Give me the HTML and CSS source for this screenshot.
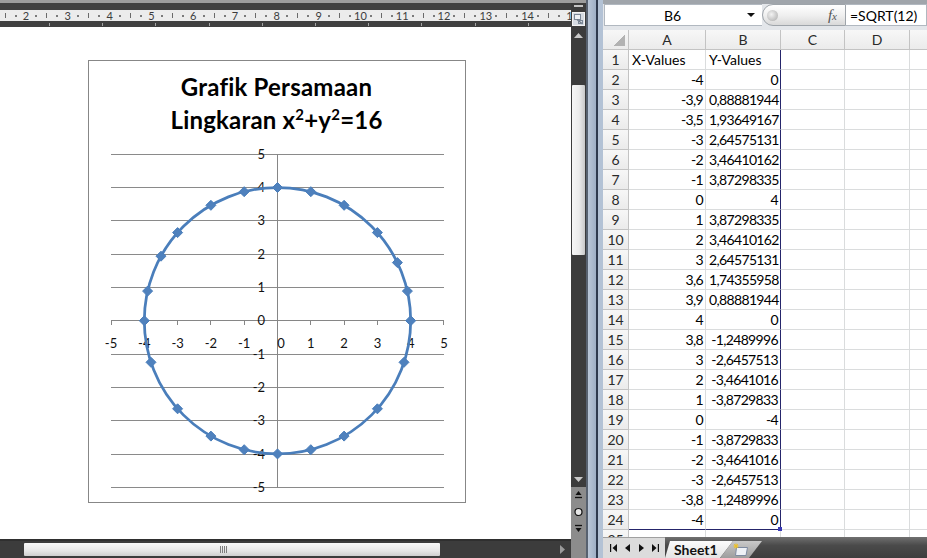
FILE: index.html
```html
<!DOCTYPE html>
<html>
<head>
<meta charset="utf-8">
<title>Grafik Persamaan Lingkaran</title>
<link rel="stylesheet" href="styles.css">
</head>
<body>
<div class="app">
  <div class="word">
    <div class="ruler-wrap">
      <div class="ruler-top"></div>
      <div class="ruler-gap"></div>
      <div class="ruler">
        <div class="ruler-marks">
          <div class="seg"><span class="num"></span><span class="dot"></span><span class="bar"></span><span class="dot"></span></div>
          <div class="seg"><span class="num">2</span><span class="dot"></span><span class="bar"></span><span class="dot"></span></div>
          <div class="seg"><span class="num">3</span><span class="dot"></span><span class="bar"></span><span class="dot"></span></div>
          <div class="seg"><span class="num">4</span><span class="dot"></span><span class="bar"></span><span class="dot"></span></div>
          <div class="seg"><span class="num">5</span><span class="dot"></span><span class="bar"></span><span class="dot"></span></div>
          <div class="seg"><span class="num">6</span><span class="dot"></span><span class="bar"></span><span class="dot"></span></div>
          <div class="seg"><span class="num">7</span><span class="dot"></span><span class="bar"></span><span class="dot"></span></div>
          <div class="seg"><span class="num">8</span><span class="dot"></span><span class="bar"></span><span class="dot"></span></div>
          <div class="seg"><span class="num">9</span><span class="dot"></span><span class="bar"></span><span class="dot"></span></div>
          <div class="seg"><span class="num">10</span><span class="dot"></span><span class="bar"></span><span class="dot"></span></div>
          <div class="seg"><span class="num">11</span><span class="dot"></span><span class="bar"></span><span class="dot"></span></div>
          <div class="seg"><span class="num">12</span><span class="dot"></span><span class="bar"></span><span class="dot"></span></div>
          <div class="seg"><span class="num">13</span><span class="dot"></span><span class="bar"></span><span class="dot"></span></div>
          <div class="seg"><span class="num">14</span><span class="dot"></span><span class="bar"></span><span class="dot"></span></div>
          <div class="seg"><span class="num">1</span></div>
        </div>
      </div>
      <div class="ruler-tabs">
        <i></i><i></i><i></i><i></i><i></i><i></i><i></i><i></i><i></i><i></i>
      </div>
    </div>

    <div class="vscroll">
      <div class="vs-top"></div>
      <div class="vs-split"><i></i></div>
      <div class="vs-icon">
        <svg width="13" height="14" viewBox="0 0 13 14">
          <rect x="0.5" y="0.5" width="12" height="13" fill="#d6dbe2" stroke="#f2f2f2"/>
          <rect x="2.5" y="2.5" width="6" height="5" fill="#eef1f5" stroke="#7b8796"/>
          <path d="M5 7.5 L10.5 12" stroke="#6c7785" stroke-width="1.2"/>
          <rect x="6.5" y="8.5" width="4" height="3" fill="none" stroke="#7b8796"/>
        </svg>
      </div>
      <div class="vs-btn"><svg width="9" height="5" viewBox="0 0 9 5"><path d="M0 5 L4.5 0 L9 5Z" fill="#c9c9c9"/></svg></div>
      <div class="vs-track"><div class="vs-thumb"></div></div>
      <div class="vs-btn"><svg width="9" height="5" viewBox="0 0 9 5"><path d="M0 0 L4.5 5 L9 0Z" fill="#c9c9c9"/></svg></div>
      <div class="vs-browse">
        <svg width="15" height="71" viewBox="0 0 15 71">
          <path d="M4.5 8 L7.5 4 L10.5 8Z" fill="#111"/>
          <path d="M4 10.5 H11" stroke="#111" stroke-width="1.3"/>
          <circle cx="7.5" cy="25" r="3.5" fill="#e6e6e6" stroke="#111" stroke-width="1.2"/>
          <path d="M4 38.5 H11" stroke="#111" stroke-width="1.3"/>
          <path d="M4.5 41 L7.5 45 L10.5 41Z" fill="#111"/>
        </svg>
      </div>
    </div>

    <div class="doc">
      <div class="chart">
        <svg width="376" height="441" viewBox="1 1 376 441" class="chart-svg">
          <text x="188.5" y="36" class="title">Grafik Persamaan</text>
          <text x="188.5" y="69" class="title">Lingkaran x<tspan class="sup" dy="-9">2</tspan><tspan dy="9">+y</tspan><tspan class="sup" dy="-9">2</tspan><tspan dy="9">=16</tspan></text>

          <g class="grid">
            <path d="M23 94.5 H356 M23 127.5 H356 M23 160.5 H356 M23 194.5 H356 M23 227.5 H356 M23 294.5 H356 M23 327.5 H356 M23 360.5 H356 M23 394.5 H356 M23 427.5 H356"/>
          </g>
          <g class="axis">
            <path d="M23 260.5 H356 M189.5 94 V428"/>
            <path d="M23.5 260.5 V265 M56.5 260.5 V265 M89.5 260.5 V265 M122.5 260.5 V265 M156.5 260.5 V265 M222.5 260.5 V265 M256.5 260.5 V265 M289.5 260.5 V265 M322.5 260.5 V265 M355.5 260.5 V265"/>
          </g>

          <g class="xl">
            <text x="23" y="288">-5</text>
            <text x="56.3" y="288">-4</text>
            <text x="89.6" y="288">-3</text>
            <text x="122.9" y="288">-2</text>
            <text x="156.2" y="288">-1</text>
            <text x="193" y="288">0</text>
            <text x="222.8" y="288">1</text>
            <text x="256.1" y="288">2</text>
            <text x="289.4" y="288">3</text>
            <text x="322.7" y="288">4</text>
            <text x="356" y="288">5</text>
          </g>
          <g class="yl">
            <text x="177" y="99">5</text>
            <text x="177" y="132">4</text>
            <text x="177" y="165">3</text>
            <text x="177" y="199">2</text>
            <text x="177" y="232">1</text>
            <text x="177" y="265">0</text>
            <text x="177" y="299">-1</text>
            <text x="177" y="332">-2</text>
            <text x="177" y="365">-3</text>
            <text x="177" y="399">-4</text>
            <text x="177" y="432">-5</text>
          </g>

          <circle cx="189.5" cy="260.7" r="133.2" class="series"/>

          <defs>
            <path id="dm" d="M0 -5 L5 0 L0 5 L-5 0Z"/>
          </defs>
          <g class="markers">
            <use href="#dm" x="56.3" y="260.7"/>
            <use href="#dm" x="59.6" y="231.1"/>
            <use href="#dm" x="73.0" y="196.2"/>
            <use href="#dm" x="89.6" y="172.6"/>
            <use href="#dm" x="122.9" y="145.3"/>
            <use href="#dm" x="156.2" y="131.7"/>
            <use href="#dm" x="189.5" y="127.5"/>
            <use href="#dm" x="222.8" y="131.7"/>
            <use href="#dm" x="256.1" y="145.3"/>
            <use href="#dm" x="289.4" y="172.6"/>
            <use href="#dm" x="309.4" y="202.6"/>
            <use href="#dm" x="319.4" y="231.1"/>
            <use href="#dm" x="322.7" y="260.7"/>
            <use href="#dm" x="316.0" y="302.3"/>
            <use href="#dm" x="289.4" y="348.8"/>
            <use href="#dm" x="256.1" y="376.1"/>
            <use href="#dm" x="222.8" y="389.7"/>
            <use href="#dm" x="189.5" y="393.9"/>
            <use href="#dm" x="156.2" y="389.7"/>
            <use href="#dm" x="122.9" y="376.1"/>
            <use href="#dm" x="89.6" y="348.8"/>
            <use href="#dm" x="63.0" y="302.3"/>
          </g>
        </svg>
      </div>
    </div>

    <div class="hscroll">
      <div class="hs-thumb"><span class="grip"><i></i><i></i><i></i><i></i></span></div>
      <div class="hs-arrow"><svg width="5" height="9" viewBox="0 0 5 9"><path d="M0 0 L5 4.5 L0 9Z" fill="#9a9a9a"/></svg></div>
    </div>
  </div>

  <div class="divider"></div>

  <div class="excel">
    <div class="fbar">
      <div class="namebox">
        <span class="nb-text">B6</span>
        <span class="nb-arrow"><svg width="8" height="4" viewBox="0 0 8 4"><path d="M0 0 L8 0 L4 4Z" fill="#111"/></svg></span>
      </div>
      <div class="fx-btn">
        <span class="knob"></span>
        <span class="fx">f<span class="fx-x">x</span></span>
      </div>
      <div class="formula">=SQRT(12)</div>
    </div>

    <div class="sheet">
      <div class="corner"><i></i></div><div class="ch">A</div><div class="ch">B</div><div class="ch">C</div><div class="ch">D</div><div class="ch last"></div>

      <div class="rh">1</div><div class="c">X-Values</div><div class="c selr">Y-Values</div><div class="c"></div><div class="c"></div><div class="c last"></div>
      <div class="rh">2</div><div class="c n">-4</div><div class="c n selr">0</div><div class="c"></div><div class="c"></div><div class="c last"></div>
      <div class="rh">3</div><div class="c n">-3,9</div><div class="c n selr">0,88881944</div><div class="c"></div><div class="c"></div><div class="c last"></div>
      <div class="rh">4</div><div class="c n">-3,5</div><div class="c n selr">1,93649167</div><div class="c"></div><div class="c"></div><div class="c last"></div>
      <div class="rh">5</div><div class="c n">-3</div><div class="c n selr">2,64575131</div><div class="c"></div><div class="c"></div><div class="c last"></div>
      <div class="rh">6</div><div class="c n">-2</div><div class="c n selr">3,46410162</div><div class="c"></div><div class="c"></div><div class="c last"></div>
      <div class="rh">7</div><div class="c n">-1</div><div class="c n selr">3,87298335</div><div class="c"></div><div class="c"></div><div class="c last"></div>
      <div class="rh">8</div><div class="c n">0</div><div class="c n selr">4</div><div class="c"></div><div class="c"></div><div class="c last"></div>
      <div class="rh">9</div><div class="c n">1</div><div class="c n selr">3,87298335</div><div class="c"></div><div class="c"></div><div class="c last"></div>
      <div class="rh">10</div><div class="c n">2</div><div class="c n selr">3,46410162</div><div class="c"></div><div class="c"></div><div class="c last"></div>
      <div class="rh">11</div><div class="c n">3</div><div class="c n selr">2,64575131</div><div class="c"></div><div class="c"></div><div class="c last"></div>
      <div class="rh">12</div><div class="c n">3,6</div><div class="c n selr">1,74355958</div><div class="c"></div><div class="c"></div><div class="c last"></div>
      <div class="rh">13</div><div class="c n">3,9</div><div class="c n selr">0,88881944</div><div class="c"></div><div class="c"></div><div class="c last"></div>
      <div class="rh">14</div><div class="c n">4</div><div class="c n selr">0</div><div class="c"></div><div class="c"></div><div class="c last"></div>
      <div class="rh">15</div><div class="c n">3,8</div><div class="c n selr">-1,2489996</div><div class="c"></div><div class="c"></div><div class="c last"></div>
      <div class="rh">16</div><div class="c n">3</div><div class="c n selr">-2,6457513</div><div class="c"></div><div class="c"></div><div class="c last"></div>
      <div class="rh">17</div><div class="c n">2</div><div class="c n selr">-3,4641016</div><div class="c"></div><div class="c"></div><div class="c last"></div>
      <div class="rh">18</div><div class="c n">1</div><div class="c n selr">-3,8729833</div><div class="c"></div><div class="c"></div><div class="c last"></div>
      <div class="rh">19</div><div class="c n">0</div><div class="c n selr">-4</div><div class="c"></div><div class="c"></div><div class="c last"></div>
      <div class="rh">20</div><div class="c n">-1</div><div class="c n selr">-3,8729833</div><div class="c"></div><div class="c"></div><div class="c last"></div>
      <div class="rh">21</div><div class="c n">-2</div><div class="c n selr">-3,4641016</div><div class="c"></div><div class="c"></div><div class="c last"></div>
      <div class="rh">22</div><div class="c n">-3</div><div class="c n selr">-2,6457513</div><div class="c"></div><div class="c"></div><div class="c last"></div>
      <div class="rh">23</div><div class="c n">-3,8</div><div class="c n selr">-1,2489996</div><div class="c"></div><div class="c"></div><div class="c last"></div>
      <div class="rh">24</div><div class="c n selb">-4</div><div class="c n selr selb handle">0</div><div class="c"></div><div class="c"></div><div class="c last"></div>
      <div class="rh r25"></div><div class="c"></div><div class="c"></div><div class="c"></div><div class="c"></div><div class="c last"></div>
    </div>

    <div class="tabs">
      <div class="tab-nav">
        <svg width="7" height="8" viewBox="0 0 7 8"><path d="M0.5 0 V8" stroke="#111" stroke-width="1.4"/><path d="M7 0 L2.5 4 L7 8Z" fill="#111"/></svg>
        <svg width="5" height="8" viewBox="0 0 5 8"><path d="M5 0 L0 4 L5 8Z" fill="#111"/></svg>
        <svg width="5" height="8" viewBox="0 0 5 8"><path d="M0 0 L5 4 L0 8Z" fill="#111"/></svg>
        <svg width="7" height="8" viewBox="0 0 7 8"><path d="M0 0 L4.5 4 L0 8Z" fill="#111"/><path d="M6.5 0 V8" stroke="#111" stroke-width="1.4"/></svg>
      </div>
      <div class="sheet-tab">Sheet1</div>
      <div class="new-tab">
        <svg width="18" height="14" viewBox="0 0 18 14">
          <path d="M4.5 4.5 H15.5 L14 12.5 H3.5 Z" fill="#eef1f6" stroke="#7d8aa0"/>
          <path d="M4 0.5 V5.5 M1.5 3 H6.5 M2.2 1.2 L5.8 4.8 M5.8 1.2 L2.2 4.8" stroke="#f2c21b" stroke-width="1"/>
        </svg>
      </div>
    </div>
  </div>
</div>
</body>
</html>
```

FILE: styles.css
```css
* { box-sizing: border-box; }
html, body { margin: 0; padding: 0; }
body {
  width: 927px;
  height: 558px;
  overflow: hidden;
  background: #3c3c3c;
  font-family: Lato, "Liberation Sans", sans-serif;
  color: #000;
}
.app { display: flex; width: 927px; height: 558px; }

/* ---------- Word side ---------- */
.word {
  width: 586px;
  flex: none;
  display: grid;
  grid-template-columns: 571px 15px;
  grid-template-rows: 27px 512px 19px;
}
.ruler-wrap {
  grid-column: 1;
  grid-row: 1;
  background: #404040;
  overflow: hidden;
  display: flex;
  flex-direction: column;
}
.ruler-top { height: 3px; background: #9d9d9d; flex: none; }
.ruler-gap { height: 7px; flex: none; }
.ruler { height: 11px; background: #ececec; flex: none; overflow: hidden; }
.ruler-marks { display: flex; margin-left: -21px; height: 11px; }
.seg { flex: none; width: 41.8px; display: flex; }
.seg > span {
  width: 10.45px;
  height: 11px;
  display: flex;
  align-items: center;
  justify-content: center;
}
.num { font-size: 11px; line-height: 11px; color: #3c3c3c; }
.dot::after { content: ""; width: 2px; height: 2px; background: #7a7a7a; display: block; }
.bar::after { content: ""; width: 1px; height: 5px; background: #6a6a6a; display: block; }
.ruler-tabs {
  height: 6px;
  flex: none;
  display: flex;
  gap: 52.2px;
  padding: 2px 0 0 49px;
}
.ruler-tabs i { display: block; width: 1px; height: 3px; background: #a4a4a4; flex: none; }

.vscroll {
  grid-column: 2;
  grid-row: 1 / span 3;
  background: #3c3c3c;
  display: flex;
  flex-direction: column;
}
.vs-top { height: 3px; background: #9d9d9d; flex: none; }
.vs-split { height: 7px; flex: none; display: flex; justify-content: center; padding-top: 2px; }
.vs-split i { display: block; width: 9px; height: 2px; background: #c4c4c4; }
.vs-icon { height: 17px; flex: none; display: flex; justify-content: center; align-items: center; }
.vs-btn { height: 16px; flex: none; display: flex; justify-content: center; align-items: center; }
.vs-track { flex: 1; padding: 42px 1px 0 1px; }
.vs-thumb {
  height: 170px;
  background: linear-gradient(90deg, #f6f6f6, #ebebeb 55%, #c8c8c8);
  border-radius: 1px;
}
.vs-browse { height: 71px; flex: none; background: #8c8c8c; display: flex; justify-content: center; }

.doc {
  grid-column: 1;
  grid-row: 2;
  background: #fff;
  padding: 33px 0 0 88px;
  overflow: hidden;
}
.chart {
  width: 378px;
  height: 443px;
  border: 1px solid #878787;
  background: #fff;
}
.chart-svg { display: block; }
.title {
  font-family: Lato, "Liberation Sans", sans-serif;
  font-weight: 700;
  font-size: 24px;
  letter-spacing: 0.2px;
  text-anchor: middle;
  fill: #000;
}
.sup { font-size: 15px; }
.grid path { stroke: #8a8a8a; stroke-width: 1; fill: none; }
.axis path { stroke: #868686; stroke-width: 1; fill: none; }
.xl text, .yl text {
  font-family: Lato, "Liberation Sans", sans-serif;
  font-size: 13px;
  fill: #111;
}
.xl text { text-anchor: middle; }
.yl text { text-anchor: end; }
.series { fill: none; stroke: #4a7ebb; stroke-width: 2.75; }
.markers use { fill: #4f81bd; stroke: #4a7ebb; stroke-width: 1; }

.hscroll {
  grid-column: 1;
  grid-row: 3;
  background: #3c3c3c;
  border-top: 2px solid #2f2f2f;
  display: flex;
  align-items: center;
  padding-left: 24px;
}
.hs-thumb {
  width: 416px;
  height: 13px;
  background: linear-gradient(#f8f8f8, #e6e6e6 60%, #cfcfcf);
  border-radius: 1px;
  display: flex;
  justify-content: center;
  align-items: center;
}
.grip { display: flex; gap: 1px; margin-left: -18px; }
.grip i { display: block; width: 1px; height: 7px; background: #7d7d7d; }
.hs-arrow { margin-left: auto; width: 18px; display: flex; justify-content: center; }

.divider {
  width: 17px;
  flex: none;
  background: linear-gradient(90deg, #57616f 0 2px, #bac7d8 2px, #9eafc5 10px, #2e3a4e 10px 12px, #b3c2d5 12px);
}

/* ---------- Excel side ---------- */
.excel {
  flex: 1;
  min-width: 0;
  display: flex;
  flex-direction: column;
  background: #fff;
}
.fbar {
  height: 30px;
  flex: none;
  display: flex;
  padding: 4px 0 4px 1px;
  background: linear-gradient(#a0a5ab 0 4px, #e3e6ea 4px);
}
.namebox {
  width: 158px;
  flex: none;
  background: #fff;
  border: 1px solid #b1b8c0;
  border-right: none;
  display: flex;
  align-items: center;
  font-size: 14px;
}
.nb-text { width: 136px; text-align: center; }
.nb-arrow { width: 22px; display: flex; justify-content: center; }
.fx-btn {
  width: 84px;
  flex: none;
  border: 1px solid #9ea4aa;
  border-radius: 11px 0 0 11px;
  background: linear-gradient(#ffffff, #eeeeee 55%, #d9d9d9);
  display: flex;
  align-items: center;
  padding: 0 8px 0 4px;
}
.knob {
  width: 11px;
  height: 11px;
  border-radius: 50%;
  background: radial-gradient(circle at 40% 40%, #f3f3f3, #bfbfbf 70%, #a9a9a9);
}
.fx {
  margin-left: auto;
  font-family: "Liberation Serif", serif;
  font-style: italic;
  font-size: 15px;
  color: #555;
  line-height: 1;
}
.fx-x { font-size: 11px; }
.formula {
  flex: 1;
  background: #fff;
  border: 1px solid #b1b8c0;
  border-left: none;
  font-size: 14px;
  padding-left: 4px;
  display: flex;
  align-items: center;
  white-space: nowrap;
}

.sheet {
  flex: 1;
  overflow: hidden;
  display: grid;
  grid-template-columns: 26px 77px 75px 64px 65px 1fr;
  grid-auto-rows: 20px;
  font-size: 14px;
}
.corner, .ch, .rh {
  background: linear-gradient(#f7f7f7, #ebebeb);
  border-right: 1px solid #c3c3c3;
  border-bottom: 1px solid #c3c3c3;
  color: #2a2a2a;
}
.corner { display: flex; justify-content: flex-end; align-items: flex-end; padding: 0 3px 3px 0; }
.corner i {
  display: block;
  width: 11px;
  height: 11px;
  background: linear-gradient(135deg, transparent 50%, #b2b2b2 50%);
}
.ch { text-align: center; line-height: 19px; }
.rh { text-align: center; line-height: 19px; }
.r25::before { content: "25"; }
.c {
  border-right: 1px solid #dadcdd;
  border-bottom: 1px solid #dadcdd;
  line-height: 19px;
  padding: 0 2px 0 3px;
  white-space: nowrap;
  overflow: hidden;
}
.n { text-align: right; letter-spacing: -0.65px; }
.last { border-right: none; }
.selr { border-right-color: #25256b; }
.selb { border-bottom-color: #25256b; }
.handle { position: relative; overflow: visible; }
.handle::after {
  content: "";
  position: absolute;
  right: -2px;
  bottom: -2px;
  width: 4px;
  height: 4px;
  background: #3a3ab8;
}

.tabs {
  height: 21px;
  flex: none;
  display: flex;
  background: linear-gradient(#707070, #4a4a4a 40%, #3e3e3e);
}
.tab-nav {
  width: 62px;
  flex: none;
  background: #dcdcdc;
  border-top: 1px solid #a0a0a0;
  display: flex;
  align-items: center;
  justify-content: space-between;
  padding: 0 6px 0 7px;
}
.sheet-tab {
  width: 68px;
  flex: none;
  margin-top: 4px;
  background: linear-gradient(#fbfbfb, #e4e4e4);
  clip-path: polygon(5px 0, 100% 0, calc(100% - 13px) 100%, 0 100%);
  font-weight: 700;
  font-size: 14px;
  line-height: 17px;
  padding-left: 9px;
  color: #111;
}
.new-tab {
  width: 42px;
  flex: none;
  margin-left: -13px;
  margin-top: 4px;
  background: linear-gradient(#c9c9c9, #9d9d9d);
  clip-path: polygon(13px 0, 100% 0, calc(100% - 13px) 100%, 0 100%);
  display: flex;
  align-items: center;
  justify-content: center;
}
```
